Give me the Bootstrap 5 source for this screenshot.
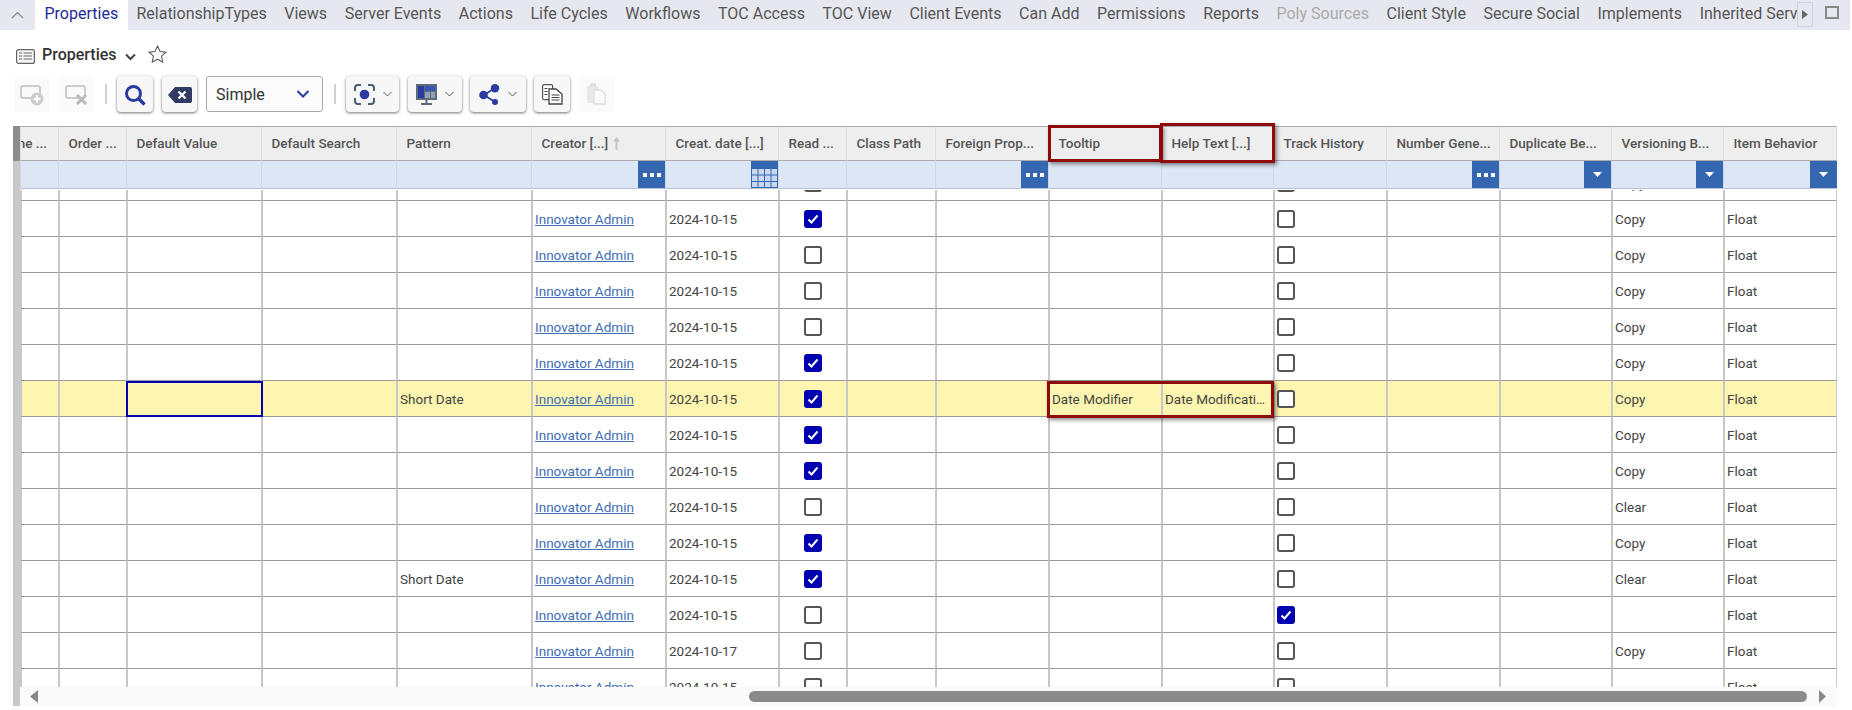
<!DOCTYPE html>
<html lang="en">
<head>
  <meta charset="UTF-8">
  <meta name="viewport" content="width=device-width, initial-scale=1.0">
  <title>Properties</title>
  <link rel="stylesheet" href="https://cdn.jsdelivr.net/npm/bootstrap@5.3.0/dist/css/bootstrap.min.css">
  <style>
    html, body { height: 710px; overflow: hidden; }
    body { background: #fff; color: #444; font-family: Roboto, "Liberation Sans", sans-serif; font-size: 13.5px; }

    .tabbar { height: 30px; margin-right: 2px; background: #e7e8ef; }
    .tab-collapse { width: 35px; }
    .tabstrip { width: 1762px; flex-wrap: nowrap; overflow: hidden; }
    .tabstrip .nav-link { padding: 0 8.8px; height: 30px; line-height: 27px; font-size: 16px; color: #555; white-space: nowrap; border-radius: 0; }
    .tabstrip .nav-item:first-child .nav-link { padding: 0 9.5px; }
    .tabstrip .nav-link.active { background: #fff; color: #1c2a96; }
    .tabstrip .nav-link.disabled { color: #aaa; }
    .tab-arrow { width: 16px; height: 25px; margin-top: 2px; border: 1px solid #d2d3da; }
    .tab-square { width: 14px; height: 13px; margin: 6px 0 0 12px; border: 2px solid #888; }

    .titlerow { height: 46px; padding: 15px 0 0 16px; }
    .titlerow b { font-size: 16px; font-weight: 500; color: #333; line-height: 20px; margin: 0 8px 0 7px; }
    .title-star { margin: 0 0 0 12px; }

    .toolrow { height: 36px; margin: 0 0 14px 14px; }
    .tbtn { height: 36px; padding: 0; border: 0; border-radius: 4px; background: #f7f7f7; box-shadow: 0 1px 3px rgba(0,0,0,.55); }
    .tbtn:disabled { background: #fafafa; box-shadow: none; opacity: 1; }
    .tsep { width: 2px; height: 20px; background: #d0d0d0; }
    .simple-select { width: 117px; height: 36px; padding: 1px 30px 0 9px; border: 1px solid #aaa; border-radius: 3px; background-color: #fbfbfb; color: #333; font-size: 16px;
      background-position: right 12px center; background-size: 14px 10px;
      background-image: url("data:image/svg+xml,%3csvg xmlns='http://www.w3.org/2000/svg' viewBox='0 0 14 10'%3e%3cpath fill='none' stroke='%232b3a9e' stroke-width='2' d='M1.5 2l5.5 5.5L12.500 2'/%3e%3c/svg%3e"); }

    .gridbox { margin-left: 13px; width: 1824px; height: 580px; }
    .gridstrip { width: 7px; background: linear-gradient(#8c8c8c 35px, #c8c8c8 35px); }
    .gridmain { width: 1817px; }
    .gridtable { width: 1817px; margin: 0; table-layout: fixed; border-collapse: separate; border-spacing: 0; font-size: 13.5px; }
    .gridtable th, .gridtable td { padding: 0; position: relative; background: transparent; box-shadow: none; vertical-align: middle; }

    .headrow th { height: 35px; padding-left: 9.5px; background: #eee; border-top: 1px solid #aaa; border-bottom: 1px solid #aaa; border-left: 1px solid #ddd; color: #555; font-weight: 500; white-space: nowrap; }
    .headrow th:last-child { border-right: 1px solid #ddd; }
    .filterrow td { height: 28px; background: #dde6f4; border-bottom: 1px solid #b8c2d2; border-left: 1px solid #cdd8ea; }
    .filter-btn { width: 27px; height: 27px; margin-left: auto; background: #3567b0; }
    .clipleft { justify-content: flex-end; overflow: hidden; margin-right: 11px; margin-left: -9.5px; }
    .sortmark { margin: -2px 0 0 5px; vertical-align: middle; }

    .bodywrap { height: 498px; overflow: hidden; border-top: 1px solid #fff; }
    .bodytable td { height: 36px; border-left: 2px solid #c8c8c8; border-bottom: 1px solid #999; color: #444; }
    .bodytable td:last-child { border-right: 1px solid #c8c8c8; }
    .bodytable tr.curr-row td { background: #fdf5b0; }
    .celltxt { padding: 1px 5px 0 2px; white-space: nowrap; overflow: hidden; text-overflow: ellipsis; }
    .celltxt a { color: #3d6db5; }
    .cbx { display: block; width: 18px; height: 18px; margin: 1px 0 0 0; border: 2px solid #555; border-radius: 3px; background: #fff; }
    .cbx.on { border-color: #0000b0; background: #0000b0; }
    .mid-cbx { margin-left: 24px; }
    .track-cbx { margin-left: 2px; }

    .activecell { position: absolute; top: 0; bottom: -1px; left: -2px; right: -2px; border: 2px solid #0000b0; z-index: 1; }
    .redbox { position: absolute; border: 3px solid #8f0a0a; box-shadow: 2px 2px 4px rgba(0,0,0,.45); pointer-events: none; z-index: 2; }
    .rb-tooltip { left: -1px; right: -1px; top: -2px; bottom: -2px; }
    .rb-help { left: -2px; right: -2px; top: -4px; bottom: -3px; }
    .rb-row { left: -3px; width: 227px; top: 0; bottom: -2px; }

    .hscroll { height: 19px; width: 1817px; background: #fafafa; padding: 0 11px 0 10px; }
    .hthumb { width: 1058px; height: 11px; margin-left: 711px; background: #8a8a8a; border-radius: 6px; }
  </style>
</head>
<body>
  <div class="tabbar d-flex">
    <div class="tab-collapse d-flex align-items-center justify-content-center">
      <svg width="13" height="8" viewBox="0 0 13 8"><path d="M1 7l5.500-5.500L12 7" fill="none" stroke="#888" stroke-width="1.2"/></svg>
    </div>
    <ul class="nav tabstrip" id="tabs"></ul>
    <div class="tab-arrow d-flex align-items-center justify-content-center">
      <svg width="6" height="9" viewBox="0 0 6 9"><path d="M0 0l6 4.500L0 9z" fill="#666"/></svg>
    </div>
    <div class="tab-square"></div>
  </div>

  <div class="titlerow d-flex align-items-start">
    <svg class="mt-1" width="19" height="15" viewBox="0 0 19 15"><rect x=".6" y=".6" width="17.800" height="13.800" rx="2" fill="#f4f4f4" stroke="#666" stroke-width="1.2"/><path d="M3 4h3M3 7h3M3 10h3M7.500 4H16M7.500 7H16M7.500 10H16" stroke="#666" stroke-width="1.2"/></svg>
    <b>Properties</b>
    <svg class="mt-2" width="11" height="8" viewBox="0 0 11 8"><path d="M1 1.500l4.500 4.500L10 1.500" fill="none" stroke="#444" stroke-width="2"/></svg>
    <svg class="title-star" width="19" height="18" viewBox="0 0 18 17"><path d="M9 1l2.400 5.200 5.600.6-4.200 3.800 1.200 5.600L9 13.400l-5 2.800 1.200-5.600L1 6.800l5.600-.6z" fill="none" stroke="#555"/></svg>
  </div>

  <div class="toolrow d-flex align-items-center">
    <button class="btn tbtn" style="width:36px" disabled>
      <svg width="24" height="22" viewBox="0 0 24 22"><rect x="1" y="2" width="19" height="12" rx="2" fill="none" stroke="#ccc" stroke-width="2"/><circle cx="17" cy="15" r="6.500" fill="#ccc"/><path d="M17 11.500v7M13.500 15h7" stroke="#fff" stroke-width="2"/></svg>
    </button>
    <button class="btn tbtn" style="width:36px;margin-left:9px" disabled>
      <svg width="24" height="22" viewBox="0 0 24 22"><rect x="1" y="2" width="19" height="12" rx="2" fill="none" stroke="#ccc" stroke-width="2"/><path d="M12 11l9 9M21 11l-9 9" stroke="#bbb" stroke-width="3"/></svg>
    </button>
    <span class="tsep" style="margin:0 10px"></span>
    <button class="btn tbtn" style="width:36px">
      <svg width="22" height="22" viewBox="0 0 22 22"><circle cx="9.500" cy="9.500" r="7" fill="none" stroke="#2b3a9e" stroke-width="3"/><path d="M14.500 14.500l6 6" stroke="#2b3a9e" stroke-width="3.400"/></svg>
    </button>
    <button class="btn tbtn" style="width:35px;margin-left:9px">
      <svg width="24" height="16" viewBox="0 0 24 16"><path d="M7 0h15a2 2 0 0 1 2 2v12a2 2 0 0 1-2 2H7L0 8z" fill="#2f3b63"/><path d="M10.500 4.500l7 7M17.500 4.500l-7 7" stroke="#fff" stroke-width="2.200"/></svg>
    </button>
    <select class="form-select simple-select" style="margin-left:9px"><option>Simple</option></select>
    <span class="tsep" style="margin:0 10px 0 11px"></span>
    <button class="btn tbtn d-flex align-items-center justify-content-center gap-2" style="width:53px">
      <svg width="21" height="21" viewBox="0 0 21 21"><path d="M1 7V4a3 3 0 0 1 3-3h3M14 1h3a3 3 0 0 1 3 3v3M20 14v3a3 3 0 0 1-3 3h-3M7 20H4a3 3 0 0 1-3-3v-3" fill="none" stroke="#4a6070" stroke-width="2"/><circle cx="10.500" cy="10.500" r="4.800" fill="#2b3a9e"/></svg>
      <svg width="9" height="6" viewBox="0 0 9 6"><path d="M.5 1l4 4 4-4" fill="none" stroke="#555"/></svg>
    </button>
    <button class="btn tbtn d-flex align-items-center justify-content-center gap-2" style="width:54px;margin-left:9px">
      <svg width="21" height="21" viewBox="0 0 21 21"><rect width="21" height="16" fill="#5c6b7c"/><rect x="2" y="2" width="6" height="12" fill="#2b3a9e"/><rect x="9" y="2" width="10" height="5" fill="#3a55b5"/><rect x="9" y="8" width="5" height="6" fill="#8fa0b5"/><rect x="15" y="8" width="4" height="6" fill="#8fa0b5"/><path d="M10.500 16v3M5 20h11" stroke="#5c6b7c" stroke-width="2"/></svg>
      <svg width="9" height="6" viewBox="0 0 9 6"><path d="M.5 1l4 4 4-4" fill="none" stroke="#555"/></svg>
    </button>
    <button class="btn tbtn d-flex align-items-center justify-content-center gap-2" style="width:56px;margin-left:8px">
      <svg width="21" height="21" viewBox="0 0 21 21"><path d="M5 11L16 4M5 11l11 7" stroke="#2b3a9e" stroke-width="1.600"/><circle cx="4.500" cy="11" r="4.300" fill="#2b3a9e"/><circle cx="16" cy="4.200" r="4.200" fill="#2b3a9e"/><circle cx="16" cy="18" r="3" fill="#2b3a9e"/></svg>
      <svg width="9" height="6" viewBox="0 0 9 6"><path d="M.5 1l4 4 4-4" fill="none" stroke="#555"/></svg>
    </button>
    <button class="btn tbtn" style="width:36px;margin-left:8px">
      <svg width="21" height="21" viewBox="0 0 21 21"><rect x=".6" y=".6" width="10" height="15" rx="1.500" fill="#fff" stroke="#555" stroke-width="1.200"/><path d="M7 5h7l6 5v10H7z" fill="#fff" stroke="#444" stroke-width="1.300"/><path d="M9.500 11h8M9.500 13.500h8M9.500 16h8M2.500 4.500h3M2.500 7.500h3M2.500 10.500h3" stroke="#444" stroke-width="1.200"/></svg>
    </button>
    <button class="btn tbtn" style="width:35px;margin-left:9px" disabled>
      <svg width="21" height="24" viewBox="0 0 21 24"><rect x="1" y="4" width="12" height="17" fill="#e8e8e8"/><rect x="4" y="1.500" width="6" height="3" fill="#ddd"/><path d="M8 8h7l4 4v10H8z" fill="#fbfbfb" stroke="#ddd" stroke-width="1.300"/></svg>
    </button>
  </div>

  <div class="gridbox d-flex">
    <div class="gridstrip"></div>
    <div class="gridmain">
      <table class="table gridtable">
        <colgroup id="headCols"></colgroup>
        <thead>
          <tr class="headrow" id="headRow"></tr>
        </thead>
        <tbody>
          <tr class="filterrow" id="filterRow"></tr>
        </tbody>
      </table>
      <div class="bodywrap" id="bodyWrap">
        <table class="table gridtable bodytable">
          <colgroup id="bodyCols"></colgroup>
          <tbody id="rows"></tbody>
        </table>
      </div>
      <div class="hscroll d-flex align-items-center">
        <svg width="8" height="13" viewBox="0 0 8 13"><path d="M8 0v13L0 6.500z" fill="#888"/></svg>
        <div class="hthumb"></div>
        <svg class="ms-auto" width="7" height="13" viewBox="0 0 7 13"><path d="M0 0v13l7-6.500z" fill="#888"/></svg>
      </div>
    </div>
  </div>

  <script src="https://cdn.jsdelivr.net/npm/bootstrap@5.3.0/dist/js/bootstrap.bundle.min.js"></script>
  <script>
    const tabs = ['Properties', 'RelationshipTypes', 'Views', 'Server Events', 'Actions', 'Life Cycles', 'Workflows', 'TOC Access', 'TOC View', 'Client Events', 'Can Add', 'Permissions', 'Reports', 'Poly Sources', 'Client Style', 'Secure Social', 'Implements', 'Inherited Server Events'];
    document.getElementById('tabs').innerHTML = tabs.map((t, i) => {
      const cls = i === 0 ? ' active' : t === 'Poly Sources' ? ' disabled' : '';
      return `<li class="nav-item"><a class="nav-link${cls}" href="#">${t}</a></li>`;
    }).join('');

    const widths = [38, 68, 135, 135, 135, 134, 113, 68, 89, 113, 113, 112, 113, 113, 112, 112, 114];
    const cols = widths.map(w => `<col style="width:${w}px">`).join('');
    document.getElementById('headCols').innerHTML = cols;
    document.getElementById('bodyCols').innerHTML = cols;

    const sortArrow = '<svg class="sortmark" width="7" height="13" viewBox="0 0 7 13"><path d="M3.500 0L7 4.500H4.500V13h-2V4.500H0z" fill="#c4c4c4"/></svg>';
    const heads = ['Name ...', 'Order ...', 'Default Value', 'Default Search', 'Pattern', 'Creator [...]', 'Creat. date [...]', 'Read ...', 'Class Path', 'Foreign Prop...', 'Tooltip', 'Help Text [...]', 'Track History', 'Number Gene...', 'Duplicate Be...', 'Versioning B...', 'Item Behavior'];
    document.getElementById('headRow').innerHTML = heads.map((h, i) => {
      if (i === 0) return `<th><div class="d-flex clipleft">${h}</div></th>`;
      if (i === 5) return `<th>${h}${sortArrow}</th>`;
      if (i === 10) return `<th>${h}<div class="redbox rb-tooltip"></div></th>`;
      if (i === 11) return `<th>${h}<div class="redbox rb-help"></div></th>`;
      return `<th>${h}</th>`;
    }).join('');

    const dots = '<div class="filter-btn d-flex align-items-center justify-content-center"><svg width="18" height="4" viewBox="0 0 18 4" fill="#fff"><rect width="4" height="4"/><rect x="7" width="4" height="4"/><rect x="14" width="4" height="4"/></svg></div>';
    const drop = '<div class="filter-btn d-flex align-items-center justify-content-center"><svg width="9" height="5" viewBox="0 0 9 5"><path d="M0 0h9L4.500 5z" fill="#fff"/></svg></div>';
    const cal = '<div class="filter-btn"><svg class="d-block" width="27" height="27" viewBox="0 0 27 27"><rect y="7" width="27" height="20" fill="#c9d8ef"/><path d="M.5 7v20M7 7v20M13.500 7v20M20 7v20M26.500 7v20M0 7.500h27M0 14h27M0 20.500h27M0 26.500h27" stroke="#3567b0" fill="none"/></svg></div>';
    const filters = { 5: dots, 6: cal, 9: dots, 13: dots, 14: drop, 15: drop, 16: drop };
    document.getElementById('filterRow').innerHTML = widths.map((w, i) => `<td>${filters[i] || ''}</td>`).join('');

    const box = on => on
      ? '<span class="cbx on"><svg class="d-block" width="14" height="14" viewBox="0 0 14 14"><path d="M2.500 7.500l3 3 6-7" fill="none" stroke="#fff" stroke-width="2"/></svg></span>'
      : '<span class="cbx"></span>';

    // read, track, versioning, date
    const data = [
      [0, 0, 'Copy'], [1, 0, 'Copy'], [0, 0, 'Copy'], [0, 0, 'Copy'], [0, 0, 'Copy'], [1, 0, 'Copy'],
      [1, 0, 'Copy'], [1, 0, 'Copy'], [1, 0, 'Copy'], [0, 0, 'Clear'], [1, 0, 'Copy'], [1, 0, 'Clear'],
      [0, 1, ''], [0, 0, 'Copy', '2024-10-17'], [0, 0, '']
    ];
    const txt = s => `<div class="celltxt">${s}</div>`;
    document.getElementById('rows').innerHTML = data.map((r, i) => {
      const curr = i === 6;
      const short = i === 6 || i === 11;
      return `<tr class="${curr ? 'curr-row' : ''}">
        <td></td><td></td>
        <td>${curr ? '<div class="activecell"></div>' : ''}</td>
        <td></td>
        <td>${txt(short ? 'Short Date' : '')}</td>
        <td>${txt('<a href="#">Innovator Admin</a>')}</td>
        <td>${txt(r[3] || '2024-10-15')}</td>
        <td><div class="mid-cbx">${box(r[0])}</div></td>
        <td></td><td></td>
        <td>${curr ? '<div class="redbox rb-row"></div>' + txt('Date Modifier') : ''}</td>
        <td>${curr ? txt('Date Modification Date') : ''}</td>
        <td><div class="track-cbx">${box(r[1])}</div></td>
        <td></td><td></td>
        <td>${txt(r[2])}</td>
        <td>${txt('Float')}</td>
      </tr>`;
    }).join('');
    document.getElementById('bodyWrap').scrollTop = 25;
  </script>
</body>
</html>
